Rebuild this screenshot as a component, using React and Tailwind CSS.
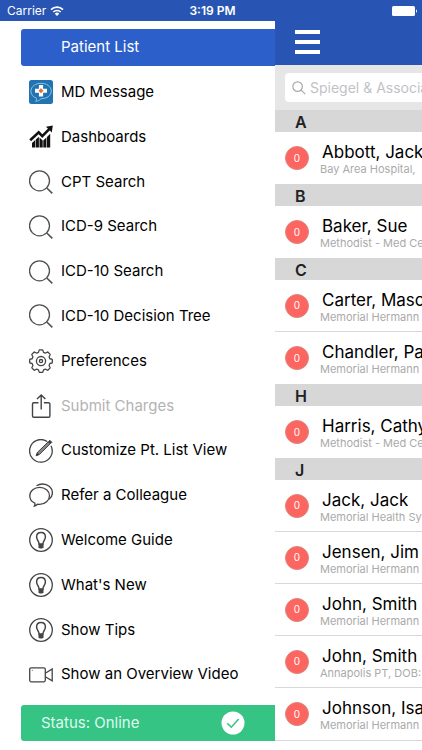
import { useState } from 'react';

function MessageIcon() {
  return (
    <svg viewBox="0 0 24 24" className="w-6 h-6" fill="none">
      <rect width="24" height="24" rx="2.5" fill="#2273b0" />
      <path
        d="M7.5 18.2C4 17 1.900 14.400 1.900 11.200 1.900 6.500 6.400 3.300 12 3.300S22.300 6.500 22.300 11c0 4.700-4.500 7.700-10.300 7.700-1.300 1.500-3 2.500-5.300 2.600.8-.9 1-1.900.8-3.100Z"
        stroke="#8cc3e8"
        strokeWidth="1"
      />
      <path d="M9.900 5h4.200v3.700H18v4.100h-3.900v3.700H9.900v-3.700H6V8.700h3.900Z" fill="#fff" />
      <path d="M12 8.500l2.200 2.200-2.200 2.300-2.200-2.300Z" fill="#e0703c" stroke="#e0703c" strokeWidth=".6" />
    </svg>
  );
}

function DashboardIcon() {
  return (
    <svg viewBox="0 0 24 24" className="w-6 h-6" fill="#111">
      <path d="M3 18l3.200-3v7.500H3zM6.800 14.500l3.100-2.800v10.800H6.800zM10.500 12.500l3.200 3v7h-3.200zM14.300 15.500l3.100-3v10h-3.100zM18 12l3.200-3.300v13.800H18z" />
      <path d="M1.200 15.200L9.700 7.400l3.600 3.800 6.900-7" fill="none" stroke="#111" strokeWidth="2.600" />
      <path d="M17 1.700L23.800.6l-1 6.900z" />
    </svg>
  );
}

function SearchIcon() {
  return (
    <svg viewBox="0 0 24 24" className="w-6 h-6" fill="none" stroke="#505050" strokeWidth="1.300">
      <circle cx="10.500" cy="10.800" r="10" />
      <path d="M17.800 18l5.500 5.300" strokeWidth="1.600" />
    </svg>
  );
}

function GearIcon() {
  return (
    <svg viewBox="0 0 24 24" className="w-6 h-6" fill="none" stroke="#444" strokeWidth="1.300" strokeLinejoin="round">
      <path d="M10.300.9h3.400c.4 0 .5 2.300.9 2.500l1.700.7c.5.200 2.200-1.400 2.500-1.100l2.400 2.400c.3.300-1.300 2-1.100 2.500l.7 1.700c.2.400 2.500.4 2.500.8v3.400c0 .4-2.300.5-2.500.9l-.7 1.700c-.2.500 1.400 2.200 1.100 2.500l-2.400 2.400c-.3.300-2-1.300-2.500-1.100l-1.700.7c-.4.200-.5 2.400-.9 2.400h-3.400c-.4 0-.5-2.200-.9-2.400l-1.700-.7c-.5-.2-2.200 1.400-2.500 1.100l-2.400-2.400c-.3-.3 1.300-2 1.100-2.500l-.7-1.700c-.2-.4-2.500-.5-2.500-.9v-3.400c0-.4 2.300-.4 2.500-.8l.7-1.700c.2-.5-1.400-2.200-1.100-2.500L5.200 3c.3-.3 2 1.300 2.500 1.100l1.700-.7c.4-.2.500-2.500.9-2.500Z" />
      <circle cx="12" cy="12.100" r="4.600" />
      <circle cx="12" cy="12.100" r="1.600" />
    </svg>
  );
}

function ShareIcon() {
  return (
    <svg viewBox="0 0 24 24" className="w-6 h-6" fill="none" stroke="#444" strokeWidth="1.400">
      <path d="M9.500 8.800H4.700a1.200 1.200 0 0 0-1.200 1.200v12a1.200 1.200 0 0 0 1.200 1.200h15a1.200 1.200 0 0 0 1.200-1.200V10a1.200 1.200 0 0 0-1.200-1.200h-4.800" />
      <path d="M12.200 15.500V1.200M8 5l4.200-4 4.200 4" />
    </svg>
  );
}

function EditIcon() {
  return (
    <svg viewBox="0 0 24 24" className="w-6 h-6" fill="none" stroke="#444" strokeWidth="1.300">
      <path d="M18.200 2.500A11.300 11.300 0 1 0 22 6.800" />
      <path d="M7.200 16.700l1.400-3.500L19.200 2.900l1.900 2L10.600 15.300Z" fill="#888" strokeWidth="1" strokeLinejoin="round" />
      <path d="M19.300 2.700l1.500-1.500 2.100 2.100-1.500 1.500zM7.200 16.700l1.200-2.800 1.500 1.600z" fill="#333" strokeWidth=".8" />
    </svg>
  );
}

function ChatIcon() {
  return (
    <svg viewBox="0 0 24 24" className="w-6 h-6" fill="none" stroke="#444" strokeWidth="1.300">
      <path d="M5.900 20.200C2.600 18.700.8 16 .8 13c0-5 4.400-8.700 9.900-8.700S20.500 8 20.500 12.700s-4.300 8.700-9.800 8.700c-.8 0-1.500-.1-2.200-.2-.9.900-1.900 1.500-3.100 1.800.5-.9.700-1.800.5-2.800Z" />
      <path d="M7.500 2.800C9.300 1.600 11.100 1 13.400 1c5.600 0 10 3.900 10 8.900 0 2.700-1.300 4.900-3.300 6.400" />
    </svg>
  );
}

function BulbIcon() {
  return (
    <svg viewBox="0 0 24 24" className="w-6 h-6" fill="none" stroke="#444" strokeWidth="1.300">
      <circle cx="12" cy="12" r="11.300" />
      <path d="M10.200 16.200c0-3-2.600-4.300-2.600-7.200 0-2.700 1.900-4.500 4.400-4.500s4.400 1.800 4.400 4.500c0 2.900-2.600 4.200-2.600 7.200Z" strokeWidth="1.500" />
      <path d="M9.500 15.500h5v3.700l-1.200 1.300h-2.600l-1.200-1.300z" fill="#444" stroke="none" />
    </svg>
  );
}

function VideoIcon() {
  return (
    <svg viewBox="0 0 24 24" className="w-6 h-6" fill="none" stroke="#444" strokeWidth="1.300">
      <rect x=".7" y="4.800" width="15.600" height="14" rx="1.500" />
      <path d="M16.300 10.300l6.900-4.400v12l-6.900-4.200" />
      <circle cx="3.400" cy="7.400" r=".2" strokeWidth=".7" />
    </svg>
  );
}

const menuItems = [
  { label: 'MD Message', icon: MessageIcon },
  { label: 'Dashboards', icon: DashboardIcon },
  { label: 'CPT Search', icon: SearchIcon },
  { label: 'ICD-9 Search', icon: SearchIcon },
  { label: 'ICD-10 Search', icon: SearchIcon },
  { label: 'ICD-10 Decision Tree', icon: SearchIcon },
  { label: 'Preferences', icon: GearIcon },
  { label: 'Submit Charges', icon: ShareIcon, disabled: true },
  { label: 'Customize Pt. List View', icon: EditIcon },
  { label: 'Refer a Colleague', icon: ChatIcon },
  { label: 'Welcome Guide', icon: BulbIcon },
  { label: "What's New", icon: BulbIcon },
  { label: 'Show Tips', icon: BulbIcon },
  { label: 'Show an Overview Video', icon: VideoIcon },
];

const sections = [
  { letter: 'A', patients: [{ name: 'Abbott, Jack', place: 'Bay Area Hospital,' }] },
  { letter: 'B', patients: [{ name: 'Baker, Sue', place: 'Methodist - Med Center' }] },
  {
    letter: 'C',
    patients: [
      { name: 'Carter, Mason', place: 'Memorial Hermann' },
      { name: 'Chandler, Pa', place: 'Memorial Hermann' },
    ],
  },
  { letter: 'H', patients: [{ name: 'Harris, Cathy', place: 'Methodist - Med Center' }] },
  {
    letter: 'J',
    patients: [
      { name: 'Jack, Jack', place: 'Memorial Health System' },
      { name: 'Jensen, Jim', place: 'Memorial Hermann' },
      { name: 'John, Smith', place: 'Memorial Hermann' },
      { name: 'John, Smith', place: 'Annapolis PT, DOB:' },
      { name: 'Johnson, Isa', place: 'Memorial Hermann' },
    ],
  },
];

function StatusBar() {
  return (
    <div className="grid grid-cols-3 items-center h-[21px] pl-[7px] pr-1 bg-[#2855b3] text-white text-xs">
      <div className="flex items-center gap-1">
        <span>Carrier</span>
        <svg viewBox="0 0 14 10" className="w-[14px] h-[10px]" fill="none" stroke="#fff" strokeWidth="1.700">
          <path d="M1 3.600a8.600 8.600 0 0 1 12 0M3.300 6a5.300 5.300 0 0 1 7.400 0" />
          <path d="M7 10L4.800 7.700a3.100 3.100 0 0 1 4.400 0Z" fill="#fff" stroke="none" />
        </svg>
      </div>
      <span className="text-center font-semibold">3:19 PM</span>
      <svg viewBox="0 0 26 10" className="w-[26px] h-[10px] justify-self-end" fill="#fff">
        <rect width="23" height="10" rx="1.500" />
        <path d="M24 3.200c1.300.4 1.300 3.200 0 3.600z" />
      </svg>
    </div>
  );
}

function PatientRow({ name, place }) {
  return (
    <li className="flex items-center gap-[11px] h-[52px] pl-[10px] border-b border-[#d8d8d8] last:border-b-0 whitespace-nowrap">
      <span className="flex items-center justify-center shrink-0 w-6 h-6 rounded-full border border-[#dc8580] bg-[#fd6560] text-white text-[10px]">
        0
      </span>
      <div className="pt-[2px]">
        <p className="pl-[2px] text-[17px] leading-5 text-black">{name}</p>
        <p className="text-[11px] leading-[14px] text-[#aaa]">{place}</p>
      </div>
    </li>
  );
}

export default function App() {
  const [query, setQuery] = useState('');

  return (
    <div className="flex flex-col min-h-screen overflow-hidden bg-white font-['Inter',sans-serif]">
      <StatusBar />

      <div className="flex flex-1">
        {/* Side menu */}
        <nav className="flex flex-col shrink-0 w-[275px] pl-[21px] pt-2 pb-[9px]">
          <button type="button" className="h-[37px] pl-10 rounded-l-[3px] bg-[#2c5fca] text-left text-[15px] text-white">
            Patient List
          </button>
          <ul className="flex flex-col flex-1 pt-1 pb-2">
            {menuItems.map(({ label, icon: Icon, disabled }) => (
              <li key={label} className="flex flex-1 min-h-10">
                <button
                  type="button"
                  disabled={disabled}
                  className="flex items-center gap-2 w-full pl-2 text-left text-[15px] text-black disabled:text-[#b3b3b3]"
                >
                  <Icon />
                  {label}
                </button>
              </li>
            ))}
          </ul>
          <button
            type="button"
            className="flex items-center justify-between h-9 pl-5 pr-[30px] rounded-l-[3px] bg-[#35c483] text-[15px] text-[#dffbee]"
          >
            Status: Online
            <svg viewBox="0 0 24 24" className="w-6 h-6" fill="none">
              <circle cx="12" cy="12" r="11.500" fill="#fff" />
              <path d="M6.300 12.400l4 3.800 7.400-8.200" stroke="#35c483" strokeWidth="1.500" />
            </svg>
          </button>
        </nav>

        {/* Patient list */}
        <main className="flex-1 min-w-0 overflow-hidden">
          <header className="flex items-center h-11 pl-5 pb-[2px] bg-[#2855b3]">
            <button type="button" aria-label="Menu" className="flex flex-col justify-between w-[25px] h-6">
              <span className="w-full h-1 bg-white" />
              <span className="w-full h-1 bg-white" />
              <span className="w-full h-1 bg-white" />
            </button>
          </header>
          <div className="py-2 pl-[10px] bg-[#e6e6e6]">
            <label className="flex items-center gap-1 h-[29px] pl-[7px] rounded-l-[4px] bg-white">
              <svg viewBox="0 0 14 14" className="shrink-0 w-[14px] h-[14px]" fill="none" stroke="#aaa" strokeWidth="1.200">
                <circle cx="5.600" cy="5.600" r="4.800" />
                <path d="M9.200 9.200l4 4" />
              </svg>
              <input
                type="text"
                aria-label="Search patients"
                className="flex-1 min-w-0 text-[14px] outline-none placeholder:text-[#c2c2c6]"
                placeholder="Spiegel & Associates"
                value={query}
                onChange={(e) => setQuery(e.target.value)}
              />
            </label>
          </div>
          {sections.map((section) => (
            <section key={section.letter}>
              <h2 className="h-[22px] pl-5 bg-[#d7d7d7] text-[16px] leading-6 font-semibold text-[#222]">{section.letter}</h2>
              <ul>
                {section.patients.map((patient, i) => (
                  <PatientRow key={i} {...patient} />
                ))}
              </ul>
            </section>
          ))}
          <div className="border-t border-[#d8d8d8]" />
        </main>
      </div>
    </div>
  );
}
